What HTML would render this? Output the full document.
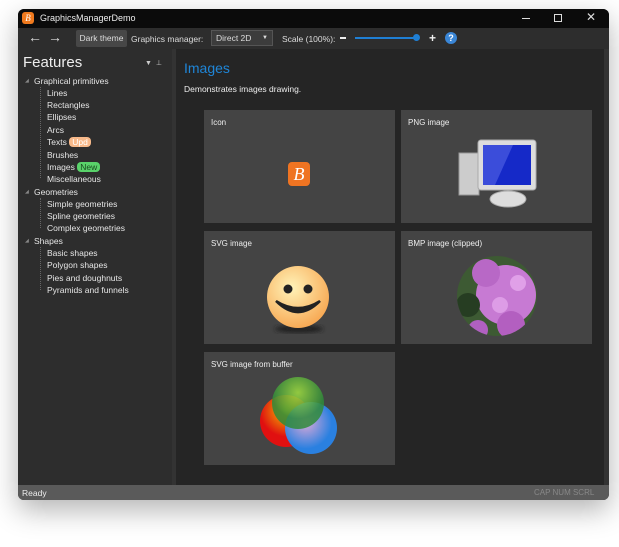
<!DOCTYPE html>
<html><head><style>
*{margin:0;padding:0;box-sizing:border-box}
body{width:619px;height:547px;background:#fff;font-family:"Liberation Sans",sans-serif;position:relative;overflow:hidden;font-size:8.5px;color:#e8e8e8}
.a{position:absolute}
.win{left:18px;top:9px;width:591px;height:491px;background:#252525;box-shadow:0 10px 28px rgba(0,0,0,.3);border-radius:6px;overflow:hidden}
.card{position:absolute;background:#444;width:191px;height:113px}
.card span{position:absolute;left:7px;top:8px;font-size:8px;color:#eee}
.tree div{position:absolute;font-size:8.5px;color:#e6e6e6;white-space:nowrap}
.tree .t{font-size:5px;color:#888}
.vl{position:absolute;border-left:1px dotted #666}
</style></head><body>
<div class="a win">
 <div class="a" style="left:0;top:0;width:591px;height:19px;background:#0b0b0b"></div>
 <div class="a" style="left:4px;top:3px;width:12px;height:12px;background:#f07a1e;border-radius:3px;color:#fff;font:italic 9px 'Liberation Serif';text-align:center;line-height:12px">B</div>
 <div class="a" style="left:22px;top:4px;font-size:9px;color:#eee">GraphicsManagerDemo</div>
 <div class="a" style="left:504px;top:9px;width:8px;height:1px;background:#ddd"></div>
 <div class="a" style="left:536px;top:5px;width:8px;height:8px;border:1px solid #ddd"></div>
 <div class="a" style="left:568px;top:1px;font-size:12px;color:#ddd">✕</div>
 <div class="a" style="left:0;top:19px;width:591px;height:21px;background:#2d2d2d"></div>
 <div class="a" style="left:10px;top:20px;font-size:14px;color:#ddd">←</div>
 <div class="a" style="left:30px;top:20px;font-size:14px;color:#ddd">→</div>
 <div class="a" style="left:58px;top:21px;width:51px;height:17px;background:#474747;border-radius:2px;font-size:8.5px;text-align:center;line-height:17px;color:#ddd">Dark theme</div>
 <div class="a" style="left:113px;top:25px;font-size:8.5px;color:#ddd">Graphics manager:</div>
 <div class="a" style="left:193px;top:21px;width:62px;height:16px;background:#3c3c3c;border:1px solid #555;font-size:8.5px;line-height:14px;padding-left:4px;color:#ddd">Direct 2D<span style="position:absolute;right:4px;font-size:6px">▼</span></div>
 <div class="a" style="left:264px;top:25px;font-size:8.5px;color:#ddd">Scale (100%):</div>
 <div class="a" style="left:322px;top:28px;width:6px;height:2px;background:#eee"></div>
 <div class="a" style="left:337px;top:28px;width:60px;height:2px;background:#1f7fd4"></div>
 <div class="a" style="left:395px;top:25px;width:7px;height:7px;border-radius:50%;background:#1f7fd4"></div>
 <div class="a" style="left:411px;top:22px;font-size:12px;font-weight:bold;color:#eee">+</div>
 <div class="a" style="left:427px;top:23px;width:12px;height:12px;border-radius:50%;background:#3a86d6;color:#fff;font-size:9px;font-weight:bold;text-align:center;line-height:12px">?</div>
 <div class="a" style="left:0;top:40px;width:154px;height:436px;background:#2d2d2d"></div>
 <div class="a" style="left:154px;top:40px;width:4px;height:436px;background:#333"></div>
 <div class="a" style="left:586px;top:40px;width:5px;height:436px;background:#333"></div>
 <div class="a" style="left:5px;top:45px;font-size:15px;color:#eee">Features</div>
 <div class="a" style="left:127px;top:50px;font-size:7px;color:#ccc">▼ &nbsp;⊥</div>
 <div class="vl" style="left:22px;top:78px;height:91px"></div>
 <div class="vl" style="left:22px;top:189px;height:30px"></div>
 <div class="vl" style="left:22px;top:238px;height:43px"></div>
 <div class="tree">
  <div class="t" style="left:7px;top:69px">◢</div>
  <div style="left:16px;top:67px">Graphical primitives</div>
  <div style="left:29px;top:79px">Lines</div>
  <div style="left:29px;top:91px">Rectangles</div>
  <div style="left:29px;top:103px">Ellipses</div>
  <div style="left:29px;top:116px">Arcs</div>
  <div style="left:29px;top:128px">Texts <span style="background:#f7b98a;color:#fff;border-radius:4px;padding:0 3px">Upd</span></div>
  <div style="left:29px;top:141px">Brushes</div>
  <div style="left:29px;top:153px">Images <span style="background:#59d26a;color:#1a4a20;border-radius:4px;padding:0 3px">New</span></div>
  <div style="left:29px;top:165px">Miscellaneous</div>
  <div class="t" style="left:7px;top:180px">◢</div>
  <div style="left:16px;top:178px">Geometries</div>
  <div style="left:29px;top:190px">Simple geometries</div>
  <div style="left:29px;top:202px">Spline geometries</div>
  <div style="left:29px;top:214px">Complex geometries</div>
  <div class="t" style="left:7px;top:229px">◢</div>
  <div style="left:16px;top:227px">Shapes</div>
  <div style="left:29px;top:239px">Basic shapes</div>
  <div style="left:29px;top:251px">Polygon shapes</div>
  <div style="left:29px;top:264px">Pies and doughnuts</div>
  <div style="left:29px;top:276px">Pyramids and funnels</div>
 </div>
 <div class="a" style="left:166px;top:51px;font-size:14px;color:#1f86d8">Images</div>
 <div class="a" style="left:166px;top:75px;font-size:8.5px;color:#eee">Demonstrates images drawing.</div>
 <div class="a" style="left:0;top:476px;width:591px;height:15px;background:#5a5a5a"></div>
 <div class="a" style="left:4px;top:479px;font-size:8.5px;color:#eee">Ready</div>
 <div class="a" style="left:516px;top:479px;font-size:8px;color:#888">CAP NUM SCRL</div>
</div>
<div class="card" style="left:204px;top:110px"><span>Icon</span>
 <div class="a" style="left:84px;top:52px;width:22px;height:24px;background:#ef7422;border-radius:4px;color:#fff;font:italic 18px 'Liberation Serif';text-align:center;line-height:24px">B</div></div>
<div class="card" style="left:401px;top:110px"><span>PNG image</span>
 <svg class="a" style="left:55px;top:28px" width="82" height="72"><rect x="3" y="15" width="20" height="42" fill="#ccc" stroke="#999"/><rect x="22" y="2" width="58" height="50" rx="3" fill="#ddd" stroke="#aaa"/><rect x="27" y="7" width="48" height="40" fill="#1529c8"/><path d="M27 7h30l-18 40h-12z" fill="#5566e6" opacity=".6"/><ellipse cx="52" cy="61" rx="18" ry="8" fill="#ddd" stroke="#aaa"/></svg></div>
<div class="card" style="left:204px;top:231px"><span>SVG image</span>
 <svg class="a" style="left:60px;top:32px" width="70" height="72"><defs><radialGradient id="s" cx=".4" cy=".35" r=".7"><stop offset="0" stop-color="#fff3b8"/><stop offset="1" stop-color="#f7a650"/></radialGradient><filter id="bl"><feGaussianBlur stdDeviation="2"/></filter></defs><ellipse cx="35" cy="66" rx="24" ry="4" fill="#222" filter="url(#bl)"/><circle cx="34" cy="34" r="31" fill="url(#s)"/><circle cx="24" cy="26" r="4.5" fill="#222"/><circle cx="44" cy="26" r="4.5" fill="#222"/><path d="M12 38q22 22 44 0q-22 14 -44 0z" fill="#222" stroke="#222" stroke-width="2.5"/></svg></div>
<div class="card" style="left:401px;top:231px"><span>BMP image (clipped)</span>
 <svg class="a" style="left:55px;top:24px" width="82" height="82"><defs><clipPath id="c"><circle cx="41" cy="41" r="40"/></clipPath></defs><g clip-path="url(#c)"><rect width="82" height="82" fill="#3d5a33"/><circle cx="50" cy="40" r="30" fill="#c77ad3"/><circle cx="30" cy="18" r="14" fill="#b868c6"/><circle cx="55" cy="70" r="14" fill="#b35fc0"/><circle cx="62" cy="28" r="8" fill="#e0a0e8"/><circle cx="44" cy="50" r="8" fill="#dd9ce6"/><circle cx="12" cy="50" r="12" fill="#263d22"/><circle cx="22" cy="75" r="10" fill="#b060c0"/></g></svg></div>
<div class="card" style="left:204px;top:352px"><span>SVG image from buffer</span>
 <svg class="a" style="left:55px;top:22px" width="80" height="82"><defs><radialGradient id="r" cx=".5" cy=".3"><stop offset="0" stop-color="#f3c000"/><stop offset="1" stop-color="#e01010"/></radialGradient><radialGradient id="b" cx=".4" cy=".4"><stop offset="0" stop-color="#d9a8d8"/><stop offset="1" stop-color="#2a80e0"/></radialGradient><radialGradient id="g" cx=".5" cy=".3"><stop offset="0" stop-color="#a0e040"/><stop offset="1" stop-color="#2f8a3a"/></radialGradient></defs><circle cx="27" cy="47" r="26" fill="url(#r)"/><circle cx="52" cy="54" r="26" fill="url(#b)"/><circle cx="39" cy="29" r="26" fill="url(#g)" opacity=".85"/></svg></div>
</body></html>
